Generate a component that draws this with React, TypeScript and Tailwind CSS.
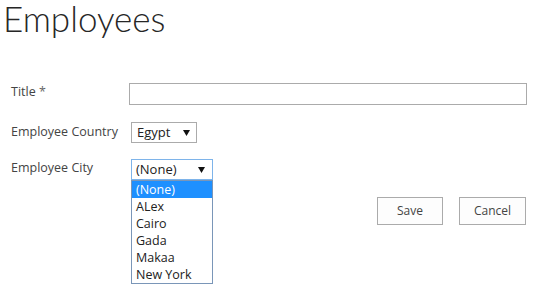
const cities = ['(None)', 'ALex', 'Cairo', 'Gada', 'Makaa', 'New York'];

const Arrow = () => (
  <svg width="7" height="6" viewBox="0 0 7 6" className="shrink-0">
    <polygon points="0,0 7,0 3.5,6" fill="#111" />
  </svg>
);

export default function App() {
  return (
    <div className="relative w-[537px] h-[289px] bg-white font-['Open_Sans',sans-serif] text-[#444] overflow-hidden">
      <h1 className="-mt-[2px] pl-[3px] font-['Lato',sans-serif] text-[35px] leading-[41px] font-light text-[#262626]">
        Employees
      </h1>

      {/* form rows */}
      <div className="mt-[44px] grid grid-cols-[129px_1fr] gap-y-[16px] items-start">
        <label className="pl-[11px] text-[12.5px] leading-[18px]">
          Title <span className="text-[#666]">*</span>
        </label>
        <div className="w-[398px] h-[22px] border border-[#ababab] bg-white" />

        <label className="pt-[2px] pl-[11px] text-[12.5px] leading-[18px]">Employee Country</label>
        <div className="mt-[1px] ml-[2px] w-[66px] h-[21px] border border-[#ababab] flex items-center justify-between pl-[5px] pr-[6px] text-[13px] text-[#222]">
          <span className="leading-none">Egypt</span>
          <Arrow />
        </div>

        <label className="pl-[11px] text-[12.5px] leading-[18px]">Employee City</label>
        <div className="ml-[2px] w-[82px] h-[21px] border border-[#7eb4ea] flex items-center justify-between pl-[4px] pr-[7px] text-[13px] text-[#222]">
          <span className="leading-none">(None)</span>
          <Arrow />
        </div>
      </div>

      {/* buttons */}
      <div className="mt-[17px] flex justify-end gap-[16px] pr-[11px]">
        <button className="w-[66px] h-[28px] border border-[#ababab] bg-[#fdfdfd] text-[12px] text-[#444]">
          Save
        </button>
        <button className="w-[67px] h-[28px] border border-[#ababab] bg-[#fdfdfd] text-[12px] text-[#444]">
          Cancel
        </button>
      </div>

      {/* open city list */}
      <ul className="absolute left-[131px] top-[180px] w-[82px] border border-[#7a96b8] bg-white text-[12.5px] text-[#222]">
        {cities.map((c, i) => (
          <li
            key={c}
            className={
              i === 0
                ? 'h-[17px] leading-[17px] pl-[4px] bg-[#1e90ff] text-white'
                : 'h-[17px] leading-[17px] pl-[4px]'
            }
          >
            {c}
          </li>
        ))}
      </ul>
    </div>
  );
}
